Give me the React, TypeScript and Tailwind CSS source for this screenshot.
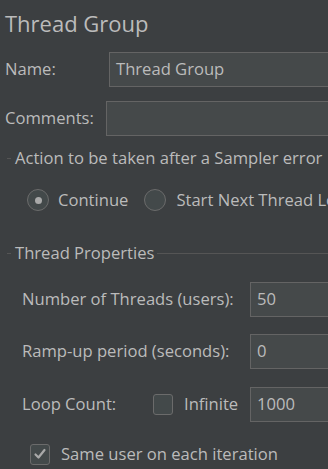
const font = { fontFamily: '"Open Sans", "Noto Sans", sans-serif' }

function TextField({ value, width }: { value?: string; width: string }) {
  return (
    <div
      className={`${width} h-[35px] shrink-0 border border-[#646464] bg-[#45494a] flex items-center pl-[6px] text-[16.6px] text-[#bbbbbb]`}
    >
      {value}
    </div>
  )
}

function Radio({ checked }: { checked?: boolean }) {
  return (
    <div className="w-[22px] h-[22px] shrink-0 rounded-full border border-[#6b6b6b] bg-[#43494a] flex items-center justify-center">
      {checked && <div className="w-[7px] h-[7px] rounded-full bg-[#a9a9a9]" />}
    </div>
  )
}

function CheckBox({ checked }: { checked?: boolean }) {
  return (
    <div className="w-[20px] h-[21px] shrink-0 rounded-[3px] border border-[#6b6b6b] bg-[#43494a] flex items-center justify-center">
      {checked && (
        <svg width="14" height="14" viewBox="0 0 14 14" fill="none">
          <path d="M2.5 7.5 L5.5 10.5 L11.5 3" stroke="#a9a9a9" strokeWidth="2.2" strokeLinecap="round" strokeLinejoin="round" />
        </svg>
      )}
    </div>
  )
}

function SectionTitle({ title, line }: { title: string; line?: boolean }) {
  return (
    <div className="flex items-center h-[24px]">
      <div className="w-[4px] h-px bg-[#555555] ml-[7px] mr-[4px] shrink-0" />
      <span className="text-[16.6px] whitespace-nowrap">{title}</span>
      {line && <div className="flex-1 h-px bg-[#555555] ml-[3px]" />}
    </div>
  )
}

export default function App() {
  return (
    <div className="w-[328px] h-[469px] overflow-hidden bg-[#3c3f41] text-[#bbbbbb]" style={font}>
      {/* Header */}
      <div className="h-[52px] pl-[5px] pt-[7px] text-[22px] leading-[32px]">Thread Group</div>

      {/* Name / Comments */}
      <div className="flex items-center text-[16.6px]">
        <span className="w-[109px] pl-[5px] shrink-0">Name:</span>
        <TextField value="Thread Group" width="w-[240px]" />
      </div>
      <div className="flex items-center mt-[14px] text-[16.6px]">
        <span className="w-[106px] pl-[5px] shrink-0">Comments:</span>
        <TextField width="w-[240px]" />
      </div>

      {/* Sampler error action */}
      <div className="mt-[10px]">
        <SectionTitle title="Action to be taken after a Sampler error" />
      </div>
      <div className="flex items-center h-[22px] mt-[19px] pl-[27px] text-[16.6px] whitespace-nowrap">
        <Radio checked />
        <span className="ml-[9px]">Continue</span>
        <div className="ml-[16px]">
          <Radio />
        </div>
        <span className="ml-[10px]">Start Next Thread Loop</span>
      </div>

      {/* Thread properties */}
      <div className="mt-[30px]">
        <SectionTitle title="Thread Properties" line />
      </div>
      <div className="pl-[22px] text-[16.6px] whitespace-nowrap">
        <div className="flex items-center mt-[17px]">
          <span className="w-[228px] shrink-0">Number of Threads (users):</span>
          <TextField value="50" width="w-[100px]" />
        </div>
        <div className="flex items-center mt-[17px]">
          <span className="w-[228px] shrink-0">Ramp-up period (seconds):</span>
          <TextField value="0" width="w-[100px]" />
        </div>
        <div className="flex items-center mt-[18px]">
          <span className="w-[131px] shrink-0">Loop Count:</span>
          <CheckBox />
          <span className="w-[77px] shrink-0 pl-[11px]">Infinite</span>
          <TextField value="1000" width="w-[100px]" />
        </div>
        <div className="flex items-center mt-[20px] pl-[8px]">
          <CheckBox checked />
          <span className="ml-[11px]">Same user on each iteration</span>
        </div>
      </div>
    </div>
  )
}
